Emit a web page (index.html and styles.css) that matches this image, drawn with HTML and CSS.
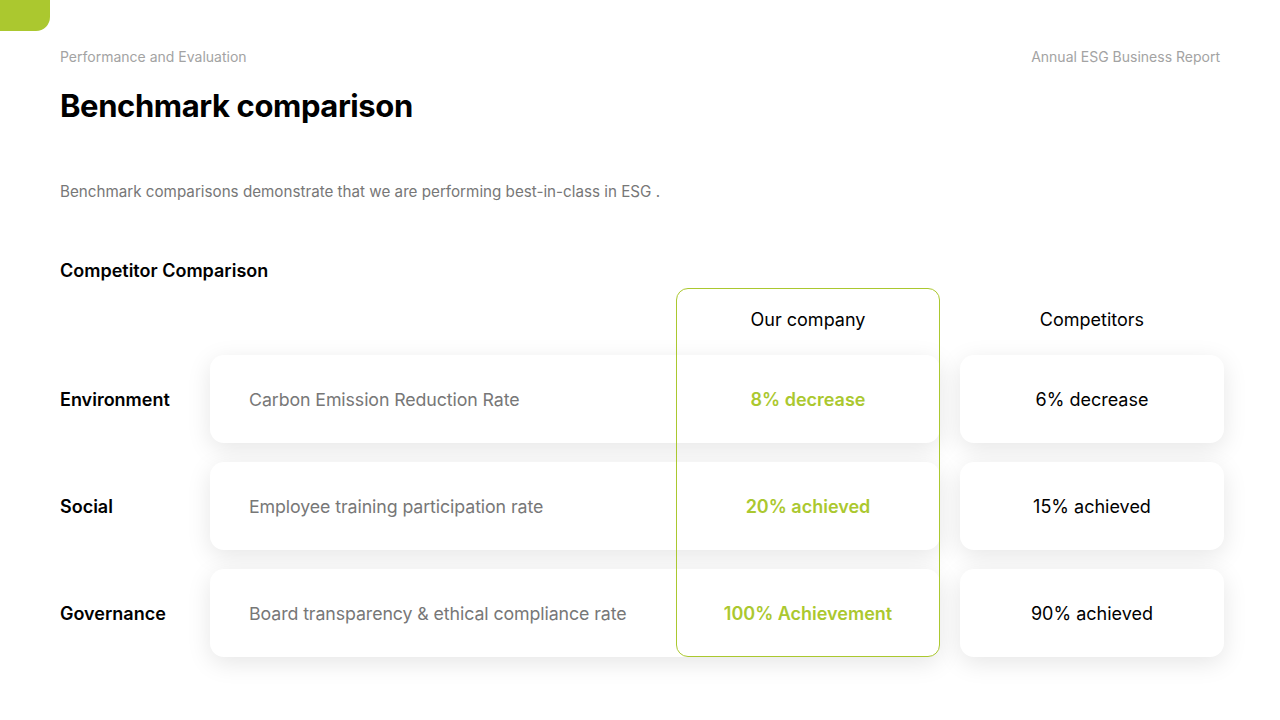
FILE: index.html
```html
<!DOCTYPE html>
<html lang="en">
<head>
    <meta charset="UTF-8">
    <meta name="viewport" content="width=device-width, initial-scale=1.0">
    <title>Benchmark comparison</title>
    <link rel="stylesheet" href="styles.css">
</head>
<body>
    <!-- 좌측 상단 포인트 탭 -->
    <div class="tab"></div>

    <div class="page">
        <header class="top">
            <span>Performance and Evaluation</span>
            <span>Annual ESG Business Report</span>
        </header>

        <h1>Benchmark comparison</h1>
        <p class="desc">Benchmark comparisons demonstrate that we are performing best-in-class in ESG .</p>

        <h2>Competitor Comparison</h2>

        <div class="cmp">
            <div class="colHd ours">Our company</div>
            <div class="colHd rival">Competitors</div>

            <div class="lbl r1">Environment</div>
            <div class="card main r1">
                <span class="item">Carbon Emission Reduction Rate</span>
                <span class="val">8% decrease</span>
            </div>
            <div class="card rival r1">6% decrease</div>

            <div class="lbl r2">Social</div>
            <div class="card main r2">
                <span class="item">Employee training participation rate</span>
                <span class="val">20% achieved</span>
            </div>
            <div class="card rival r2">15% achieved</div>

            <div class="lbl r3">Governance</div>
            <div class="card main r3">
                <span class="item">Board transparency &amp; ethical compliance rate</span>
                <span class="val">100% Achievement</span>
            </div>
            <div class="card rival r3">90% achieved</div>

            <!-- 우리회사 강조 테두리 -->
            <div class="hilite"></div>
        </div>
    </div>
</body>
</html>
```

FILE: styles.css
```css
/* 초기화 */
html, body{
    margin: 0;
    padding: 0;
}
body{
    background: #fff;
    color: #000;
    font-family: Inter, "Noto Sans", sans-serif;
    width: 1280px;
    height: 720px;
    overflow: hidden;
}

/* 포인트 탭 */
.tab{
    width: 50px;
    height: 31px;
    background: #abc82f;
    border-bottom-right-radius: 14px;
}

.page{
    padding: 0 60px;
}

/* 상단 머리글 */
.top{
    display: flex;
    justify-content: space-between;
    margin-top: 16px;
    font-size: 14px;
    line-height: 20px;
    color: #a3a3a3;
}

h1{
    margin: 19px 0 0;
    font-size: 31px;
    line-height: 40px;
    font-weight: 700;
    letter-spacing: -0.4px;
}

.desc{
    margin: 54px 0 0;
    font-size: 15.2px;
    line-height: 24px;
    color: #777;
}

h2{
    margin: 55px 0 0;
    font-size: 18px;
    line-height: 24px;
    font-weight: 600;
}

/* 비교표 */
.cmp{
    display: grid;
    grid-template-columns: 130px 446px 264px 264px;
    grid-template-rows: 48px 88px 88px 88px;
    column-gap: 20px;
    row-gap: 19px;
    margin-top: 5px;
    margin-right: -4px;
}
.r1{ grid-row: 2; }
.r2{ grid-row: 3; }
.r3{ grid-row: 4; }

.hilite{
    grid-column: 3;
    grid-row: 1 / 5;
    border: 1px solid #abc82f;
    border-radius: 12px;
    z-index: 2;
    pointer-events: none;
}

.colHd{
    grid-row: 1;
    padding-top: 21px;
    text-align: center;
    font-size: 18px;
    line-height: 22px;
}
.colHd.ours{ grid-column: 3; }
.colHd.rival{ grid-column: 4; }

.lbl{
    grid-column: 1;
    display: flex;
    align-items: center;
    font-size: 18px;
    font-weight: 600;
}

.card{
    background: #fff;
    border-radius: 14px;
    box-shadow: 0 6px 24px rgba(0, 0, 0, 0.1);
    display: flex;
    align-items: center;
    font-size: 18px;
}
.card.main{
    grid-column: 2 / 4;
}
.card.rival{
    grid-column: 4;
    justify-content: center;
}

.item{
    flex: 1;
    padding-left: 39px;
    color: #777;
    font-size: 17.8px;
    letter-spacing: -0.1px;
}
.val{
    width: 264px;
    text-align: center;
    color: #abc82f;
    font-weight: 600;
}
```
